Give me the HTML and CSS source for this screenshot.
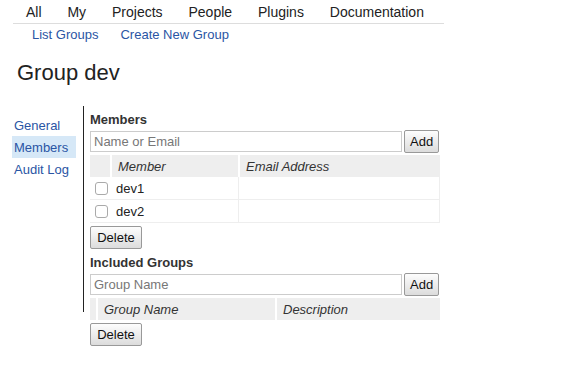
FILE: index.html
```html
<!doctype html>
<html>
	<head>
		<title>Group dev</title>
		<meta charset="utf-8" />
		<link rel="stylesheet" href="styles.css">
	</head>
	<body>

		<div class="topmenu">
			<span class="menu_item">All</span>
			<span class="menu_item">My</span>
			<span class="menu_item">Projects</span>
			<span class="menu_item">People</span>
			<span class="menu_item">Plugins</span>
			<span class="menu_item">Documentation</span>
		</div>

		<div class="submenu">
			<a class="sub_link">List Groups</a>
			<a class="sub_link">Create New Group</a>
		</div>

		<h1 class="page_title">Group dev</h1>

		<div class="screen">

			<div class="sidebar">
				<a class="side_link">General</a>
				<a class="side_link active">Members</a>
				<a class="side_link">Audit Log</a>
			</div>

			<div class="panel">

				<div class="section_title">Members</div>
				<div class="add_row">
					<input class="add_input" type="text" placeholder="Name or Email">
					<button class="btn">Add</button>
				</div>
				<table class="list members_list">
					<tr>
						<th class="col_check"></th>
						<th class="col_name">Member</th>
						<th class="col_rest">Email Address</th>
					</tr>
					<tr>
						<td class="col_check"><span class="checkbox"></span></td>
						<td class="cell_name">dev1</td>
						<td class="cell_rest"></td>
					</tr>
					<tr>
						<td class="col_check"><span class="checkbox"></span></td>
						<td class="cell_name">dev2</td>
						<td class="cell_rest"></td>
					</tr>
				</table>
				<button class="btn delete_btn">Delete</button>

				<div class="section_title">Included Groups</div>
				<div class="add_row">
					<input class="add_input" type="text" placeholder="Group Name">
					<button class="btn">Add</button>
				</div>
				<table class="list groups_list">
					<tr>
						<th class="col_check"></th>
						<th class="col_name">Group Name</th>
						<th class="col_rest">Description</th>
					</tr>
				</table>
				<button class="btn delete_btn">Delete</button>

			</div>

		</div>

	</body>
</html>
```

FILE: styles.css
```css
body {
	margin: 0;
	font-family: 'Liberation Sans', Arial, Helvetica, sans-serif;
	font-size: 13px;
	color: #222;
	background-color: #fff;
}

/* top menu */

.topmenu {
	margin-left: 13px;
	width: 431px;
	height: 24px;
	box-sizing: border-box;
	padding-top: 3px;
	border-bottom: 1px solid #ddd;
	font-size: 14px;
	line-height: 18px;
	color: #222;
}

.menu_item {
	padding: 0 13px;
	margin-right: -4px;
}

.submenu {
	display: flex;
	gap: 22px;
	padding-left: 32px;
	margin-top: 3px;
	line-height: 16px;
}

.sub_link {
	color: #2a55a4;
	cursor: pointer;
}

.page_title {
	margin: 17px 0 0 17px;
	font-size: 22px;
	font-weight: normal;
	line-height: 26px;
	color: #222;
}

/* main screen */

.screen {
	display: flex;
	align-items: flex-start;
	margin-top: 20px;
}

.sidebar {
	width: 84px;
	height: 206px;
	box-sizing: border-box;
	padding: 8px 0 0 12px;
	border-right: 1px solid #222;
	flex-shrink: 0;
}

.side_link {
	display: block;
	width: 64px;
	height: 22px;
	line-height: 23px;
	padding-left: 2px;
	box-sizing: border-box;
	color: #2a55a4;
	cursor: pointer;
}

.active {
	background-color: #d6e8f7;
}

.panel {
	margin-left: 6px;
	width: 350px;
}

.section_title {
	margin-top: 6px;
	font-weight: bold;
	line-height: 16px;
	color: #333;
}

.add_row {
	display: flex;
	align-items: center;
	gap: 2px;
	margin-top: 2px;
}

.add_input {
	width: 312px;
	height: 21px;
	box-sizing: border-box;
	margin: 0;
	padding: 0 3px;
	border: 1px solid #ccc;
	font-family: inherit;
	font-size: 13px;
	color: #222;
}

.add_input::placeholder {
	color: #777;
}

.btn {
	height: 23px;
	margin: 0;
	padding: 0 5px;
	border: 1px solid #999;
	border-radius: 2px;
	background: linear-gradient(#fdfdfd, #dcdcdc);
	font-family: inherit;
	font-size: 13px;
	color: #111;
}

.delete_btn {
	display: block;
	margin: 3px 0 3px 0;
	width: 52px;
}

/* lists */

.list {
	width: 350px;
	margin-top: 2px;
	border-collapse: separate;
	border-spacing: 0;
	table-layout: fixed;
}

.list th {
	height: 22px;
	padding: 0 6px;
	background-color: #eee;
	font-weight: normal;
	font-style: italic;
	text-align: left;
	color: #333;
}

.list th + th {
	border-left: 2px solid #fff;
}

.list td {
	height: 22px;
	padding: 0 5px;
	border-bottom: 1px solid #eee;
}

.members_list th.col_check {
	width: 20px;
	padding: 0;
}

.members_list th.col_name {
	width: 114px;
}

.groups_list th.col_check {
	width: 6px;
	padding: 0;
}

.groups_list th.col_name {
	width: 165px;
}

.list td.col_check {
	padding: 0 0 0 5px;
}

.list td.cell_name {
	padding-left: 6px;
}

.cell_rest {
	border-left: 1px solid #eee;
	border-right: 1px solid #eee;
}

.checkbox {
	display: block;
	width: 11px;
	height: 11px;
	border: 1px solid #aaa;
	border-radius: 3px;
	background-color: #fff;
}
```
